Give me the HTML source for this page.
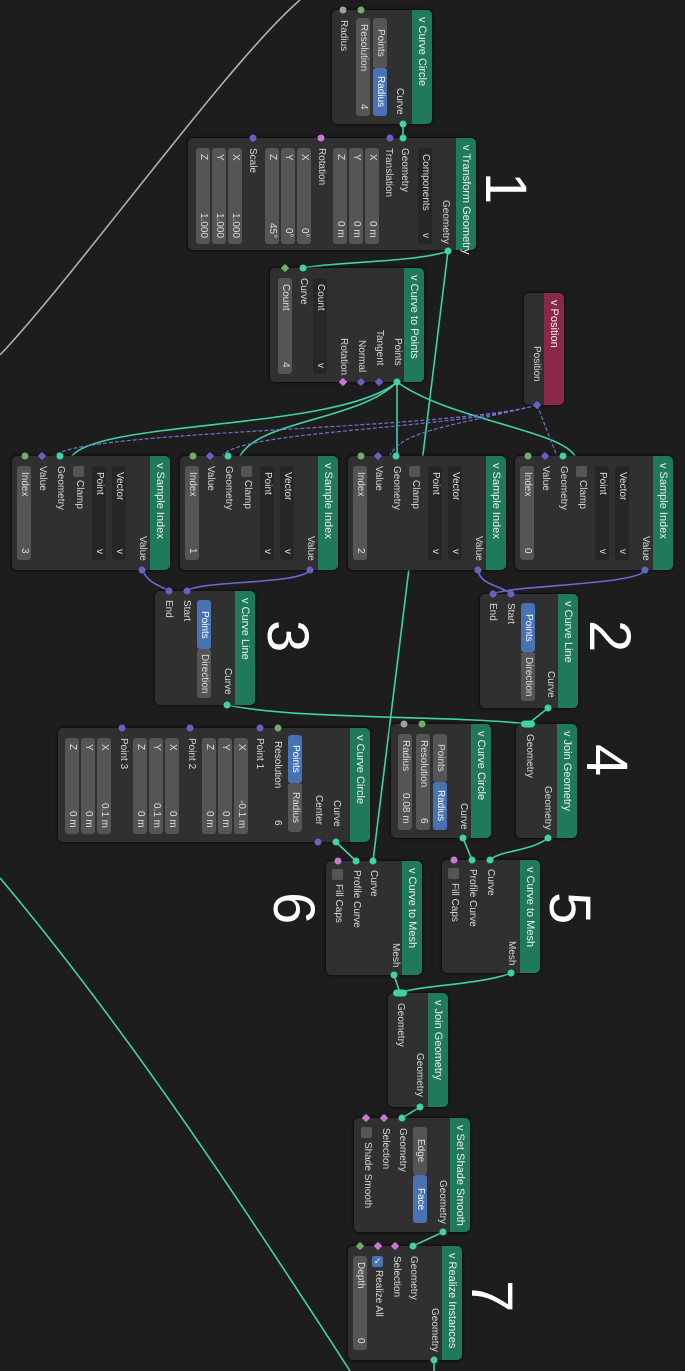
<!DOCTYPE html>
<html><head><meta charset="utf-8"><style>
body{margin:0;width:685px;height:1371px;background:#1d1d1d;overflow:hidden;position:relative;font-family:"Liberation Sans",sans-serif}
.n{position:absolute;background:#303030;border-radius:5px;box-shadow:0 0 3px #000}
.h{position:absolute;top:0;right:0;bottom:0;width:20px;background:#1f7a5d;border-radius:0 5px 5px 0;writing-mode:vertical-rl;font-size:11px;line-height:20px;color:#eee;padding-top:7px;box-sizing:border-box;white-space:nowrap}
.t{position:absolute;writing-mode:vertical-rl;font-size:10px;color:#d8d8d8;white-space:nowrap;line-height:12px}
.f{position:absolute;background:#555;border-radius:3px;width:14px;writing-mode:vertical-rl;display:flex;justify-content:space-between;font-size:10px;line-height:14px;color:#ddd;padding:6px 0;box-sizing:border-box;white-space:nowrap}
.d{background:#262626}
.b{background:#4772b3;justify-content:center;color:#fff}
.g{justify-content:center}
.c{position:absolute;width:11px;height:11px;background:#555;border-radius:2px}
.s{position:absolute;width:7px;height:7px;border-radius:50%;transform:translate(-50%,-50%);background:#3fd2a5}
.p{background:#6363c7}.pk{background:#c87ad0}.gr{background:#6cb062}.gy{background:#a0a0a0}
.dm{border-radius:1px;transform:translate(-50%,-50%) rotate(45deg);width:6px;height:6px}
.big{position:absolute;writing-mode:vertical-rl;font-size:58px;color:#fff;line-height:58px}
</style></head><body>
<svg width="685" height="1371" style="position:absolute;left:0;top:0">
<g fill="none" stroke-width="1.6">
<path d="M0 355 C80 270 230 60 300 0" stroke="#b0b0b0"/>
<path d="M0 878 C120 1020 240 1200 350 1371" stroke="#3fd2a5"/>
<g stroke="#3fd2a5">
<path d="M403 124 L403 138"/>
<path d="M448 251 C420 262 330 262 303 268"/>
<path d="M448 251 L373 861"/>
<path d="M397 382 C340 430 100 420 72 456"/>
<path d="M397 382 C360 420 260 420 240 456"/>
<path d="M397 382 L397 456"/>
<path d="M397 382 C450 420 560 430 575 456"/>
<path d="M227 705 C300 720 450 715 528 724"/>
<path d="M548 708 L528 724"/>
<path d="M548 838 C530 852 500 850 490 860"/>
<path d="M463 838 L472 860"/>
<path d="M336 842 L356 861"/>
<path d="M394 975 L400 993"/>
<path d="M511 973 C480 985 420 985 400 993"/>
<path d="M420 1107 L402 1118"/>
<path d="M443 1232 L413 1246"/>
<path d="M434 1360 L434 1371"/>
</g>
<g stroke="#7070d0" stroke-width="1.2" stroke-dasharray="4 2">
<path d="M537 405 C450 430 80 430 54 456"/>
<path d="M537 405 C450 430 240 430 222 456"/>
<path d="M537 405 C460 425 400 430 390 456"/>
<path d="M537 405 L557 456"/>
</g>
<g stroke="#6a6ad0" stroke-width="1.6">
<path d="M142 570 C150 585 160 585 169 591"/>
<path d="M310 570 C300 585 200 580 187 591"/>
<path d="M478 570 C480 585 500 585 511 594"/>
<path d="M645 570 C640 585 510 585 493 594"/>
</g>
</g></svg>

<!-- Curve Circle top -->
<div class="n" style="left:332px;top:10px;width:100px;height:114px"><div class="h">v Curve Circle</div></div>
<div class="f" style="left:373px;top:18px;height:50px;justify-content:center">Points</div>
<div class="f b" style="left:373px;top:68px;height:48px">Radius</div>
<div class="f" style="left:356px;top:18px;height:98px"><span>Resolution</span><span>4</span></div>
<div class="t" style="left:337px;top:20px">Radius</div>
<div class="t" style="left:393px;top:88px">Curve</div>
<div class="s gy" style="left:343px;top:10px"></div><div class="s gr" style="left:361px;top:10px"></div>
<div class="s" style="left:403px;top:124px"></div>

<!-- Transform Geometry -->
<div class="n" style="left:188px;top:138px;width:288px;height:112px"><div class="h">v Transform Geometry</div></div>
<div class="t" style="left:439px;top:200px">Geometry</div>
<div class="f d" style="left:418px;top:148px;height:96px"><span>Components</span><span>v</span></div>
<div class="t" style="left:398px;top:148px">Geometry</div>
<div class="t" style="left:382px;top:148px">Translation</div>
<div class="f" style="left:365px;top:148px;height:96px"><span>X</span><span>0 m</span></div>
<div class="f" style="left:349px;top:148px;height:96px"><span>Y</span><span>0 m</span></div>
<div class="f" style="left:333px;top:148px;height:96px"><span>Z</span><span>0 m</span></div>
<div class="t" style="left:315px;top:148px">Rotation</div>
<div class="f" style="left:297px;top:148px;height:96px"><span>X</span><span>0°</span></div>
<div class="f" style="left:281px;top:148px;height:96px"><span>Y</span><span>0°</span></div>
<div class="f" style="left:265px;top:148px;height:96px"><span>Z</span><span>45°</span></div>
<div class="t" style="left:246px;top:148px">Scale</div>
<div class="f" style="left:228px;top:148px;height:96px"><span>X</span><span>1.000</span></div>
<div class="f" style="left:212px;top:148px;height:96px"><span>Y</span><span>1.000</span></div>
<div class="f" style="left:196px;top:148px;height:96px"><span>Z</span><span>1.000</span></div>
<div class="s" style="left:403px;top:138px"></div><div class="s p" style="left:390px;top:138px"></div>
<div class="s pk" style="left:321px;top:138px"></div><div class="s p" style="left:253px;top:138px"></div>
<div class="s" style="left:448px;top:251px"></div>

<!-- Curve to Points -->
<div class="n" style="left:270px;top:268px;width:154px;height:114px"><div class="h">v Curve to Points</div></div>
<div class="t" style="left:391px;top:338px">Points</div>
<div class="t" style="left:373px;top:330px">Tangent</div>
<div class="t" style="left:355px;top:340px">Normal</div>
<div class="t" style="left:337px;top:338px">Rotation</div>
<div class="f d" style="left:313px;top:278px;height:96px"><span>Count</span><span>v</span></div>
<div class="t" style="left:297px;top:278px">Curve</div>
<div class="f" style="left:278px;top:278px;height:96px"><span>Count</span><span>4</span></div>
<div class="s" style="left:303px;top:268px"></div><div class="s dm gr" style="left:285px;top:268px"></div>
<div class="s" style="left:397px;top:382px"></div><div class="s dm p" style="left:379px;top:382px"></div>
<div class="s dm p" style="left:361px;top:382px"></div><div class="s dm pk" style="left:343px;top:382px"></div>

<!-- Position -->
<div class="n" style="left:524px;top:293px;width:40px;height:112px"><div class="h" style="background:#8a2848">v Position</div></div>
<div class="t" style="left:530px;top:346px">Position</div>
<div class="s dm p" style="left:537px;top:405px"></div>

<!-- Sample Index x4 -->
<div class="n" style="left:12px;top:456px;width:158px;height:114px"><div class="h">v Sample Index</div></div>
<div class="t" style="left:136px;top:536px">Value</div>
<div class="f d" style="left:112px;top:466px;height:94px"><span>Vector</span><span>v</span></div>
<div class="f d" style="left:92px;top:466px;height:94px"><span>Point</span><span>v</span></div>
<div class="c" style="left:73px;top:466px"></div><div class="t" style="left:73px;top:480px">Clamp</div>
<div class="t" style="left:54px;top:466px">Geometry</div><div class="t" style="left:36px;top:466px">Value</div>
<div class="f" style="left:17px;top:466px;height:94px"><span>Index</span><span>3</span></div>
<div class="s gr" style="left:25px;top:456px"></div><div class="s dm p" style="left:42px;top:456px"></div><div class="s" style="left:60px;top:456px"></div><div class="s p" style="left:142px;top:570px"></div>

<div class="n" style="left:180px;top:456px;width:158px;height:114px"><div class="h">v Sample Index</div></div>
<div class="t" style="left:304px;top:536px">Value</div>
<div class="f d" style="left:280px;top:466px;height:94px"><span>Vector</span><span>v</span></div>
<div class="f d" style="left:260px;top:466px;height:94px"><span>Point</span><span>v</span></div>
<div class="c" style="left:241px;top:466px"></div><div class="t" style="left:241px;top:480px">Clamp</div>
<div class="t" style="left:222px;top:466px">Geometry</div><div class="t" style="left:204px;top:466px">Value</div>
<div class="f" style="left:185px;top:466px;height:94px"><span>Index</span><span>1</span></div>
<div class="s gr" style="left:193px;top:456px"></div><div class="s dm p" style="left:210px;top:456px"></div><div class="s" style="left:228px;top:456px"></div><div class="s p" style="left:310px;top:570px"></div>

<div class="n" style="left:348px;top:456px;width:158px;height:114px"><div class="h">v Sample Index</div></div>
<div class="t" style="left:472px;top:536px">Value</div>
<div class="f d" style="left:448px;top:466px;height:94px"><span>Vector</span><span>v</span></div>
<div class="f d" style="left:428px;top:466px;height:94px"><span>Point</span><span>v</span></div>
<div class="c" style="left:409px;top:466px"></div><div class="t" style="left:409px;top:480px">Clamp</div>
<div class="t" style="left:390px;top:466px">Geometry</div><div class="t" style="left:372px;top:466px">Value</div>
<div class="f" style="left:353px;top:466px;height:94px"><span>Index</span><span>2</span></div>
<div class="s gr" style="left:361px;top:456px"></div><div class="s dm p" style="left:378px;top:456px"></div><div class="s" style="left:396px;top:456px"></div><div class="s p" style="left:478px;top:570px"></div>

<div class="n" style="left:515px;top:456px;width:158px;height:114px"><div class="h">v Sample Index</div></div>
<div class="t" style="left:639px;top:536px">Value</div>
<div class="f d" style="left:615px;top:466px;height:94px"><span>Vector</span><span>v</span></div>
<div class="f d" style="left:595px;top:466px;height:94px"><span>Point</span><span>v</span></div>
<div class="c" style="left:576px;top:466px"></div><div class="t" style="left:576px;top:480px">Clamp</div>
<div class="t" style="left:557px;top:466px">Geometry</div><div class="t" style="left:539px;top:466px">Value</div>
<div class="f" style="left:520px;top:466px;height:94px"><span>Index</span><span>0</span></div>
<div class="s gr" style="left:528px;top:456px"></div><div class="s dm p" style="left:545px;top:456px"></div><div class="s" style="left:563px;top:456px"></div><div class="s p" style="left:645px;top:570px"></div>

<!-- Curve Line 3 -->
<div class="n" style="left:155px;top:591px;width:100px;height:114px"><div class="h">v Curve Line</div></div>
<div class="f b" style="left:197px;top:600px;height:49px">Points</div>
<div class="f g" style="left:197px;top:649px;height:49px">Direction</div>
<div class="t" style="left:180px;top:600px">Start</div><div class="t" style="left:162px;top:600px">End</div>
<div class="t" style="left:221px;top:668px">Curve</div>
<div class="s p" style="left:187px;top:591px"></div><div class="s p" style="left:169px;top:591px"></div><div class="s" style="left:227px;top:705px"></div>

<!-- Curve Line 2 -->
<div class="n" style="left:480px;top:594px;width:98px;height:114px"><div class="h">v Curve Line</div></div>
<div class="f b" style="left:521px;top:603px;height:49px">Points</div>
<div class="f g" style="left:521px;top:652px;height:49px">Direction</div>
<div class="t" style="left:504px;top:603px">Start</div><div class="t" style="left:486px;top:603px">End</div>
<div class="t" style="left:544px;top:671px">Curve</div>
<div class="s p" style="left:511px;top:594px"></div><div class="s p" style="left:493px;top:594px"></div><div class="s" style="left:548px;top:708px"></div>

<!-- Big Curve Circle -->
<div class="n" style="left:58px;top:728px;width:312px;height:114px"><div class="h">v Curve Circle</div></div>
<div class="f b" style="left:288px;top:735px;height:48px">Points</div>
<div class="f g" style="left:288px;top:783px;height:49px">Radius</div>
<div class="f" style="left:270px;top:735px;height:97px;background:#303030"><span>Resolution</span><span>6</span></div>
<div class="t" style="left:330px;top:800px">Curve</div><div class="t" style="left:312px;top:795px">Center</div>
<div class="t" style="left:253px;top:738px">Point 1</div>
<div class="f" style="left:234px;top:738px;height:96px"><span>X</span><span>-0.1 m</span></div>
<div class="f" style="left:218px;top:738px;height:96px"><span>Y</span><span>0 m</span></div>
<div class="f" style="left:202px;top:738px;height:96px"><span>Z</span><span>0 m</span></div>
<div class="t" style="left:185px;top:738px">Point 2</div>
<div class="f" style="left:165px;top:738px;height:96px"><span>X</span><span>0 m</span></div>
<div class="f" style="left:149px;top:738px;height:96px"><span>Y</span><span>0.1 m</span></div>
<div class="f" style="left:133px;top:738px;height:96px"><span>Z</span><span>0 m</span></div>
<div class="t" style="left:117px;top:738px">Point 3</div>
<div class="f" style="left:97px;top:738px;height:96px"><span>X</span><span>0.1 m</span></div>
<div class="f" style="left:81px;top:738px;height:96px"><span>Y</span><span>0 m</span></div>
<div class="f" style="left:65px;top:738px;height:96px"><span>Z</span><span>0 m</span></div>
<div class="s p" style="left:260px;top:728px"></div><div class="s gr" style="left:278px;top:728px"></div>
<div class="s p" style="left:190px;top:728px"></div><div class="s p" style="left:122px;top:728px"></div>
<div class="s" style="left:336px;top:842px"></div><div class="s p" style="left:318px;top:842px"></div>

<!-- Small Curve Circle -->
<div class="n" style="left:391px;top:724px;width:100px;height:114px"><div class="h">v Curve Circle</div></div>
<div class="f g" style="left:433px;top:734px;height:48px">Points</div>
<div class="f b" style="left:433px;top:782px;height:48px">Radius</div>
<div class="f" style="left:416px;top:734px;height:96px"><span>Resolution</span><span>6</span></div>
<div class="f" style="left:398px;top:734px;height:96px"><span>Radius</span><span>0.08 m</span></div>
<div class="t" style="left:457px;top:803px">Curve</div>
<div class="s gy" style="left:404px;top:724px"></div><div class="s gr" style="left:422px;top:724px"></div><div class="s" style="left:463px;top:838px"></div>

<!-- Join Geometry 4 -->
<div class="n" style="left:516px;top:724px;width:61px;height:114px"><div class="h">v Join Geometry</div></div>
<div class="t" style="left:541px;top:786px">Geometry</div><div class="t" style="left:523px;top:734px">Geometry</div>
<div class="s" style="left:528px;top:724px;width:14px;border-radius:4px"></div><div class="s" style="left:548px;top:838px"></div>

<!-- Curve to Mesh 6 -->
<div class="n" style="left:326px;top:861px;width:96px;height:114px"><div class="h">v Curve to Mesh</div></div>
<div class="t" style="left:367px;top:870px">Curve</div><div class="t" style="left:350px;top:870px">Profile Curve</div>
<div class="c" style="left:332px;top:869px"></div><div class="t" style="left:332px;top:884px">Fill Caps</div>
<div class="t" style="left:389px;top:943px">Mesh</div>
<div class="s" style="left:373px;top:861px"></div><div class="s" style="left:356px;top:861px"></div><div class="s pk" style="left:338px;top:861px"></div><div class="s" style="left:394px;top:975px"></div>

<!-- Curve to Mesh 5 -->
<div class="n" style="left:442px;top:860px;width:98px;height:113px"><div class="h">v Curve to Mesh</div></div>
<div class="t" style="left:484px;top:869px">Curve</div><div class="t" style="left:466px;top:869px">Profile Curve</div>
<div class="c" style="left:448px;top:868px"></div><div class="t" style="left:448px;top:883px">Fill Caps</div>
<div class="t" style="left:505px;top:941px">Mesh</div>
<div class="s" style="left:490px;top:860px"></div><div class="s" style="left:472px;top:860px"></div><div class="s pk" style="left:454px;top:860px"></div><div class="s" style="left:511px;top:973px"></div>

<!-- Join Geometry -->
<div class="n" style="left:388px;top:993px;width:60px;height:114px"><div class="h">v Join Geometry</div></div>
<div class="t" style="left:413px;top:1053px">Geometry</div><div class="t" style="left:394px;top:1003px">Geometry</div>
<div class="s" style="left:400px;top:993px;width:14px;border-radius:4px"></div><div class="s" style="left:420px;top:1107px"></div>

<!-- Set Shade Smooth -->
<div class="n" style="left:354px;top:1118px;width:116px;height:114px"><div class="h">v Set Shade Smooth</div></div>
<div class="t" style="left:436px;top:1180px">Geometry</div>
<div class="f g" style="left:413px;top:1127px;height:48px">Edge</div>
<div class="f b" style="left:413px;top:1175px;height:48px">Face</div>
<div class="t" style="left:396px;top:1128px">Geometry</div><div class="t" style="left:379px;top:1128px">Selection</div>
<div class="c" style="left:361px;top:1127px"></div><div class="t" style="left:361px;top:1142px">Shade Smooth</div>
<div class="s" style="left:402px;top:1118px"></div><div class="s dm pk" style="left:384px;top:1118px"></div><div class="s dm pk" style="left:366px;top:1118px"></div><div class="s" style="left:443px;top:1232px"></div>

<!-- Realize Instances -->
<div class="n" style="left:348px;top:1246px;width:114px;height:114px"><div class="h">v Realize Instances</div></div>
<div class="t" style="left:428px;top:1308px">Geometry</div>
<div class="t" style="left:407px;top:1256px">Geometry</div><div class="t" style="left:390px;top:1256px">Selection</div>
<div class="c" style="left:372px;top:1256px;background:#4772b3;color:#fff;font-size:9px;line-height:11px;text-align:center">✓</div><div class="t" style="left:372px;top:1270px">Realize All</div>
<div class="f" style="left:353px;top:1256px;height:94px"><span>Depth</span><span>0</span></div>
<div class="s" style="left:413px;top:1246px"></div><div class="s dm pk" style="left:395px;top:1246px"></div><div class="s dm pk" style="left:378px;top:1246px"></div><div class="s dm gr" style="left:360px;top:1246px"></div><div class="s" style="left:434px;top:1360px"></div>

<div class="big" style="left:476px;top:172px">1</div>
<div class="big" style="left:580px;top:620px">2</div>
<div class="big" style="left:258px;top:620px">3</div>
<div class="big" style="left:577px;top:744px">4</div>
<div class="big" style="left:540px;top:892px">5</div>
<div class="big" style="left:264px;top:892px">6</div>
<div class="big" style="left:462px;top:1280px">7</div>
</body></html>
